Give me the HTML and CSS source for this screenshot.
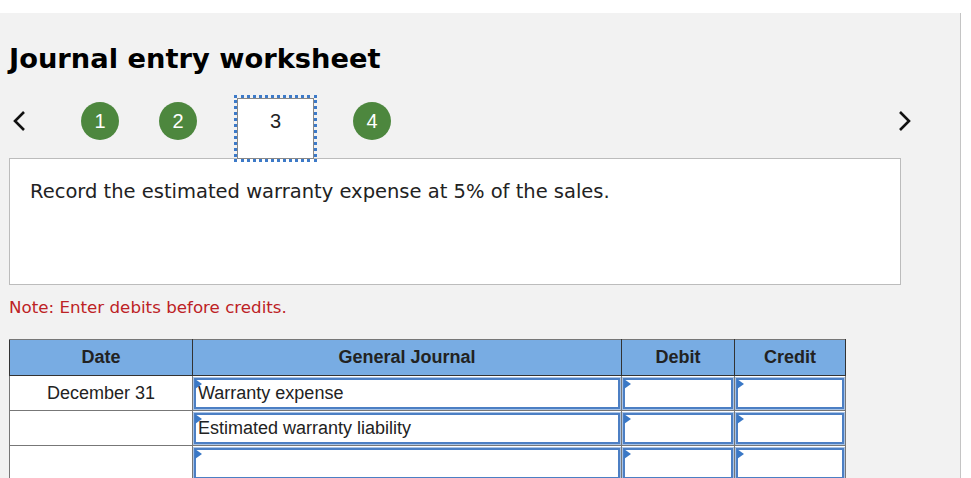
FILE: index.html
```html
<!DOCTYPE html>
<html lang="en">
<head>
  <meta charset="UTF-8">
  <meta name="viewport" content="width=device-width, initial-scale=1.0">
  <title>Journal entry worksheet</title>
  <link rel="stylesheet" href="styles.css">
</head>
<body>
  <div class="panel">
    <h1>Journal entry worksheet</h1>

    <div class="steps">
      <span class="arrow">
        <svg width="24" height="24" viewBox="0 0 24 24"><path d="M15 3 L6 12 L15 21" fill="none" stroke="#111" stroke-width="2.6"/></svg>
      </span>
      <div class="step-list">
        <span class="step done">1</span>
        <span class="step done second">2</span>
        <span class="step current">3</span>
        <span class="step done">4</span>
      </div>
      <span class="arrow next">
        <svg width="24" height="24" viewBox="0 0 24 24"><path d="M9 3 L18 12 L9 21" fill="none" stroke="#111" stroke-width="2.6"/></svg>
      </span>
    </div>

    <div class="prompt">Record the estimated warranty expense at 5% of the sales.</div>

    <p class="note">Note: Enter debits before credits.</p>

    <table class="journal">
      <thead>
        <tr>
          <th class="col-date">Date</th>
          <th class="col-account">General Journal</th>
          <th class="col-debit">Debit</th>
          <th class="col-credit">Credit</th>
        </tr>
      </thead>
      <tbody>
        <tr>
          <td class="date">December 31</td>
          <td class="entry"><div class="field">Warranty expense</div></td>
          <td class="entry"><div class="field"></div></td>
          <td class="entry"><div class="field"></div></td>
        </tr>
        <tr>
          <td class="date"></td>
          <td class="entry"><div class="field">Estimated warranty liability</div></td>
          <td class="entry"><div class="field"></div></td>
          <td class="entry"><div class="field"></div></td>
        </tr>
        <tr>
          <td class="date"></td>
          <td class="entry"><div class="field"></div></td>
          <td class="entry"><div class="field"></div></td>
          <td class="entry"><div class="field"></div></td>
        </tr>
      </tbody>
    </table>
  </div>
</body>
</html>
```

FILE: styles.css
```css
html, body {
  margin: 0;
  height: 100%;
  overflow: hidden;
  background: #fff;
}
.panel {
  margin-top: 13px;
  width: 942px;
  min-height: 100%;
  padding: 0 9px;
  background: #f2f2f2;
  border-right: 1px solid #c4c4c4;
  font-family: "DejaVu Sans", Verdana, sans-serif;
}
h1 {
  margin: 0;
  padding-top: 29px;
  font-size: 27.3px;
  line-height: 33px;
  color: #000;
}
.steps {
  display: flex;
  align-items: flex-start;
  width: 906px;
  margin-top: 20px;
  margin-bottom: -1px;
  position: relative;
  z-index: 1;
}
.arrow {
  width: 24px;
  height: 24px;
  margin-top: 14px;
}
.arrow.next {
  margin-left: auto;
}
.step-list {
  display: flex;
  align-items: flex-start;
  gap: 38px;
  margin-left: 48px;
}
.step {
  font-family: "Liberation Sans", Arial, sans-serif;
  font-size: 20px;
  text-align: center;
}
.step.done {
  width: 38px;
  height: 38px;
  line-height: 38px;
  margin-top: 7px;
  border-radius: 50%;
  background: #4d873e;
  color: #fff;
}
.step.second {
  margin-left: 2px;
}
.step.current {
  box-sizing: border-box;
  width: 77px;
  height: 61px;
  margin: 3px 1px 0 2px;
  padding-top: 11px;
  line-height: 22px;
  background: #fff;
  color: #222;
  border: 1px solid #888;
  outline: 3px dotted #3d7ac8;
  outline-offset: 0;
}
.prompt {
  box-sizing: border-box;
  width: 892px;
  height: 127px;
  padding: 21px 20px;
  background: #fff;
  border: 1px solid #bcbcbc;
  font-size: 19.5px;
  line-height: 24px;
  color: #222;
}
.note {
  margin: 12px 0 0;
  font-size: 16.7px;
  line-height: 20px;
  color: #bd2225;
}
.journal {
  margin-top: 22px;
  border-collapse: collapse;
  font-family: "Liberation Sans", Arial, sans-serif;
  font-size: 18px;
  color: #222;
}
.journal th {
  height: 35px;
  padding: 0;
  background: #78ace3;
  border: 1px solid #333;
  border-top-color: #777;
  font-weight: bold;
}
.col-date { width: 182px; }
.col-account { width: 428px; }
.col-debit { width: 112px; }
.col-credit { width: 110px; }
.journal td {
  height: 31px;
  padding: 0;
  background: #fff;
  border: 1px solid #777;
}
.date {
  text-align: center;
}
.journal td.entry {
  padding: 2px 1px 1px 1px;
  background: #fff;
}
.field {
  position: relative;
  box-sizing: border-box;
  height: 31px;
  padding-left: 2px;
  line-height: 27px;
  border: 2px solid #4c7fc4;
  box-shadow: 0 0 0 1px #a8c3e6;
  background: #fff;
}
.field::before {
  content: "";
  position: absolute;
  left: -1px;
  top: -1px;
  border-top: 5px solid transparent;
  border-bottom: 5px solid transparent;
  border-left: 7px solid #3a78c6;
}
```
